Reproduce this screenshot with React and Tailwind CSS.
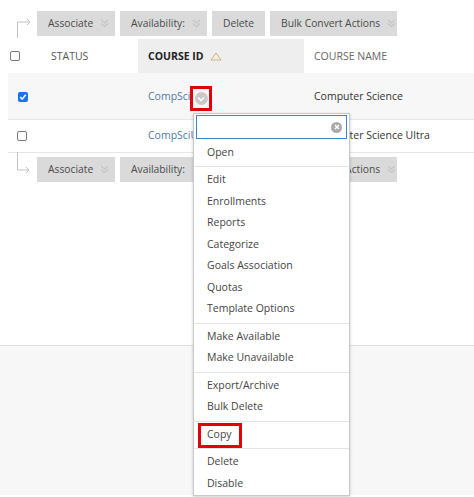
import React from 'react';

const font = { fontFamily: '"Open Sans", "Liberation Sans", sans-serif' };

// two stacked chevrons used on the gray action buttons
const DoubleChevron = () => (
  <svg width="9" height="9" viewBox="0 0 9 9" fill="none" stroke="#c4c4c4" strokeWidth="1.1">
    <polyline points="1,1 4.5,4 8,1" />
    <polyline points="1,4.5 4.5,7.5 8,4.5" />
  </svg>
);

const ActionButton = ({ label, width, chevron = true }) => (
  <div
    className={`flex items-center h-[25px] bg-[#dadada] text-[#4a4a4a] text-[10.3px] ${width} ${
      chevron ? 'pl-[11px] gap-[7px]' : 'justify-center'
    }`}
  >
    <span className="whitespace-nowrap">{label}</span>
    {chevron && <DoubleChevron />}
  </div>
);

const ActionBar = ({ top }) => (
  <div className="flex items-center">
    <div className="w-[37px] h-[25px] shrink-0">
      {top ? (
        <svg width="37" height="25" overflow="visible" fill="none" stroke="#c2c2c2" strokeWidth="1">
          <polyline points="17.5,27 17.5,11 30,11" />
          <polyline points="27,8 30,11 27,14" />
        </svg>
      ) : (
        <svg width="37" height="25" overflow="visible" fill="none" stroke="#c2c2c2" strokeWidth="1">
          <polyline points="17.5,-5 17.5,13 29,13" />
          <polyline points="26,10 29,13 26,16" />
        </svg>
      )}
    </div>
    <div className="flex gap-[5px]">
      <ActionButton label="Associate" width="w-[78px]" />
      <ActionButton label="Availability:" width="w-[87px]" />
      <ActionButton label="Delete" width="w-[53px]" chevron={false} />
      <ActionButton label="Bulk Convert Actions" width="w-[127px]" />
    </div>
  </div>
);

const Checkbox = ({ checked }) =>
  checked ? (
    <div className="w-[10px] h-[10px] rounded-[2px] bg-[#1a73e8] flex items-center justify-center">
      <svg width="8" height="8" viewBox="0 0 8 8" fill="none" stroke="white" strokeWidth="1.6">
        <polyline points="1.2,4.2 3.2,6 6.8,1.8" />
      </svg>
    </div>
  ) : (
    <div className="w-[10px] h-[10px] rounded-[2px] border border-[#7a7a7a] bg-white" />
  );

const menuGroups = [
  ['Open'],
  ['Edit', 'Enrollments', 'Reports', 'Categorize', 'Goals Association', 'Quotas', 'Template Options'],
  ['Make Available', 'Make Unavailable'],
  ['Export/Archive', 'Bulk Delete'],
  ['Copy'],
  ['Delete', 'Disable'],
];

export default function App() {
  return (
    <div className="relative w-[474px] h-[497px] bg-white overflow-hidden" style={font}>
      <div className="pt-[11px]">
        <ActionBar top />
      </div>

      {/* header */}
      <div className="mt-[3px] flex h-[34px] items-stretch text-[10.5px]">
        <div className="w-[40px] pl-[10px] flex items-center">
          <Checkbox />
        </div>
        <div className="w-[98px] pl-[11px] pt-[1px] flex items-center text-[#555]">STATUS</div>
        <div className="w-[166px] pl-[10px] pt-[1px] flex items-center gap-[6px] bg-[#eeeeee] font-bold text-[#222]">
          COURSE ID
          <svg width="12" height="9" viewBox="0 0 12 9">
            <polygon points="6,1 11,8 1,8" fill="#f3eedf" stroke="#c9b482" strokeWidth="1" />
          </svg>
        </div>
        <div className="flex-1 pl-[10px] pt-[1px] flex items-center text-[#666]">COURSE NAME</div>
      </div>

      {/* rows */}
      <div className="ml-[8px] flex h-[47px] items-center bg-[#f7f7f7] border-b border-[#e6e6e6] text-[10.5px]">
        <div className="w-[32px] pl-[10px] pt-[1px] flex items-center">
          <Checkbox checked />
        </div>
        <div className="w-[98px]" />
        <div className="relative w-[166px] pl-[10px] pt-[2px] h-full flex items-center text-[#4f7aa6]">
          CompSci
          <div className="absolute left-[52px] top-[13px] w-[22px] h-[25px] border-[3px] border-[#e3000b] bg-[#f7f7f7] flex items-center justify-center">
            <div className="w-[13px] h-[13px] rounded-full bg-[#c9c9c9] flex items-center justify-center">
              <svg width="8" height="6" viewBox="0 0 8 6" fill="none" stroke="white" strokeWidth="1.5">
                <polyline points="1,1.5 4,4.5 7,1.5" />
              </svg>
            </div>
          </div>
        </div>
        <div className="flex-1 pl-[10px] pt-[2px] text-[#333]">Computer Science</div>
      </div>
      <div className="ml-[8px] flex h-[33px] items-center border-b border-[#e6e6e6] text-[10.5px]">
        <div className="w-[32px] pl-[9px] flex items-center">
          <Checkbox />
        </div>
        <div className="w-[98px]" />
        <div className="w-[166px] pl-[10px] text-[#4f7aa6] whitespace-nowrap">CompSciUltra</div>
        <div className="flex-1 pl-[10px] text-[#333] whitespace-nowrap">Computer Science Ultra</div>
      </div>

      <div className="mt-[4px]">
        <ActionBar />
      </div>

      <div className="mt-[163px] h-[150px] bg-[#f7f7f7] border-t border-[#dedede]" />

      {/* context menu */}
      <div className="absolute left-[193px] top-[113px] w-[157px] h-[383px] bg-white border border-[#c9c9c9] shadow-[0_1px_3px_rgba(0,0,0,0.2)] text-[10.5px] text-[#444]">
        <div className="px-[2px] pt-[1px]">
          <div className="h-[24px] border-[1.5px] border-[#3b86c6] flex items-center justify-end pr-[4px]">
            <div className="w-[11px] h-[11px] rounded-full bg-[#a9a9a9] flex items-center justify-center">
              <svg width="6" height="6" viewBox="0 0 6 6" stroke="white" strokeWidth="1.4">
                <line x1="1" y1="1" x2="5" y2="5" />
                <line x1="5" y1="1" x2="1" y2="5" />
              </svg>
            </div>
          </div>
        </div>
        {menuGroups.map((group, gi) => (
          <div
            key={gi}
            className={`py-[2.5px] ${gi < menuGroups.length - 1 ? 'border-b border-[#e4e4e4]' : ''} ${
              gi === 0 ? 'pt-[3px]' : ''
            }`}
          >
            {group.map((item) => (
              <div key={item} className="relative h-[21.5px] pl-[13px] flex items-center whitespace-nowrap">
                {item}
                {item === 'Copy' && (
                  <div className="absolute left-[4px] top-[-1px] w-[44px] h-[25px] border-[3px] border-[#e3000b]" />
                )}
              </div>
            ))}
          </div>
        ))}
      </div>
    </div>
  );
}
